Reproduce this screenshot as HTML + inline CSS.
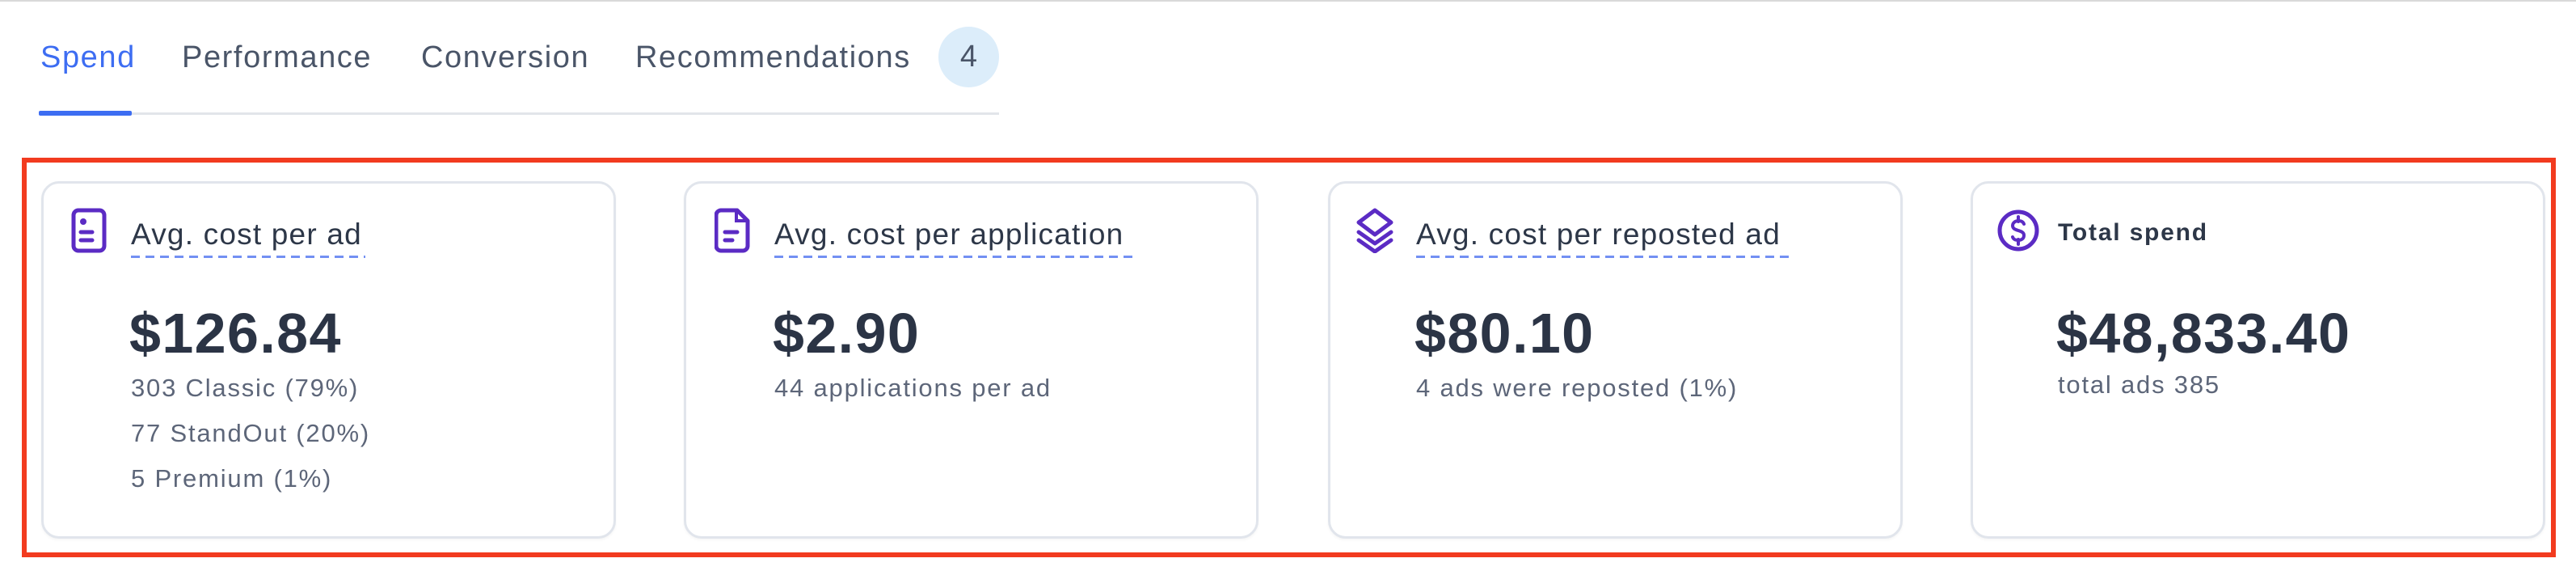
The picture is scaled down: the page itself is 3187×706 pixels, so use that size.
<!DOCTYPE html>
<html><head><meta charset="utf-8"><style>
*{margin:0;padding:0;box-sizing:border-box}
body{width:3187px;height:706px;background:#fff;position:relative;overflow:hidden;font-family:"Liberation Sans",sans-serif}
.abs{position:absolute}
.tab{position:absolute;top:50px;font-size:38px;color:#4a5568;white-space:nowrap;letter-spacing:1.6px}
.card{position:absolute;top:224px;width:711px;height:442px;border:3px solid #e1e5ec;border-radius:22px;background:#fff;box-shadow:0 2px 3px rgba(0,0,0,0.04)}
.title{position:absolute;top:268px;font-size:37px;color:#2d3748;white-space:nowrap;letter-spacing:1.2px;line-height:44px}
.dash{position:absolute;top:316px;height:3px;background:repeating-linear-gradient(90deg,#7390f3 0 11px,transparent 11px 18px)}
.val{position:absolute;top:372px;font-size:70px;font-weight:bold;color:#2b3445;white-space:nowrap;letter-spacing:1.4px;line-height:80px}
.sub{position:absolute;font-size:31px;color:#5d6679;white-space:nowrap;line-height:36px;letter-spacing:1.8px}
svg{position:absolute}
</style></head><body>
<div class="abs" style="left:0;top:0;width:3187px;height:2px;background:#d9d9d9"></div>
<div class="tab" style="left:50px;color:#3d6df2">Spend</div>
<div class="tab" style="left:225px">Performance</div>
<div class="tab" style="left:521px">Conversion</div>
<div class="tab" style="left:786px">Recommendations</div>
<div class="abs" style="left:1161px;top:33px;width:75px;height:75px;border-radius:50%;background:#dcedfa;color:#4a5568;font-size:38px;text-align:center;line-height:75px">4</div>
<div class="abs" style="left:48px;top:139px;width:1188px;height:3px;background:#e2e5ea"></div>
<div class="abs" style="left:48px;top:137px;width:115px;height:6px;background:#3d6df2;border-radius:2px"></div>

<div class="abs" style="left:27px;top:195px;width:3135px;height:494px;border:6px solid #f23b1f"></div>

<div class="card" style="left:51px"></div>
<div class="card" style="left:846px"></div>
<div class="card" style="left:1643px"></div>
<div class="card" style="left:2438px"></div>

<svg style="left:88px;top:257px" width="44" height="56" viewBox="0 0 44 56"><rect x="3" y="3" width="38" height="50" rx="6" fill="none" stroke="#5b2bc4" stroke-width="5"/><circle cx="15" cy="17" r="4" fill="#5b2bc4"/><path d="M12 30h14M12 40h14" stroke="#5b2bc4" stroke-width="5" stroke-linecap="round"/></svg>
<div class="title" style="left:162px">Avg. cost per ad</div>
<div class="dash" style="left:162px;width:290px"></div>
<div class="val" style="left:160px">$126.84</div>
<div class="sub" style="left:162px;top:462px">303 Classic (79%)</div>
<div class="sub" style="left:162px;top:518px">77 StandOut (20%)</div>
<div class="sub" style="left:162px;top:574px">5 Premium (1%)</div>

<svg style="left:884px;top:257px" width="44" height="56" viewBox="0 0 44 56"><path d="M8 3h20l13 13v31a6 6 0 0 1-6 6H8a6 6 0 0 1-6-6V9a6 6 0 0 1 6-6z" fill="none" stroke="#5b2bc4" stroke-width="5" stroke-linejoin="round"/><path d="M27 4v12h13" fill="none" stroke="#5b2bc4" stroke-width="4"/><path d="M13 30h15M13 40h9" stroke="#5b2bc4" stroke-width="5" stroke-linecap="round"/></svg>
<div class="title" style="left:958px">Avg. cost per application</div>
<div class="dash" style="left:958px;width:446px"></div>
<div class="val" style="left:956px">$2.90</div>
<div class="sub" style="left:958px;top:462px">44 applications per ad</div>

<svg style="left:1674px;top:257px" width="54" height="56" viewBox="0 0 54 56"><path d="M27 3L47 18L27 33L7 18Z" fill="none" stroke="#5b2bc4" stroke-width="5" stroke-linejoin="round"/><path d="M7 30L27 44L47 30M7 40L27 54L47 40" fill="none" stroke="#5b2bc4" stroke-width="5" stroke-linejoin="round" stroke-linecap="round"/></svg>
<div class="title" style="left:1752px">Avg. cost per reposted ad</div>
<div class="dash" style="left:1752px;width:462px"></div>
<div class="val" style="left:1750px">$80.10</div>
<div class="sub" style="left:1752px;top:462px">4 ads were reposted (1%)</div>

<svg style="left:2470px;top:258px" width="54" height="54" viewBox="0 0 54 54"><circle cx="27" cy="27" r="23" fill="none" stroke="#5b2bc4" stroke-width="5"/><path d="M34 19c-1-3-4-4-7-4s-7 2-7 6 4 5 7 6 7 2 7 6-3 6-7 6-6-1-7-4M27 10v6M27 38v6" fill="none" stroke="#5b2bc4" stroke-width="4" stroke-linecap="round"/></svg>
<div class="title" style="left:2546px;font-size:30px;font-weight:bold;top:266px;letter-spacing:1.8px">Total spend</div>
<div class="val" style="left:2544px">$48,833.40</div>
<div class="sub" style="left:2546px;top:458px">total ads 385</div>
</body></html>
